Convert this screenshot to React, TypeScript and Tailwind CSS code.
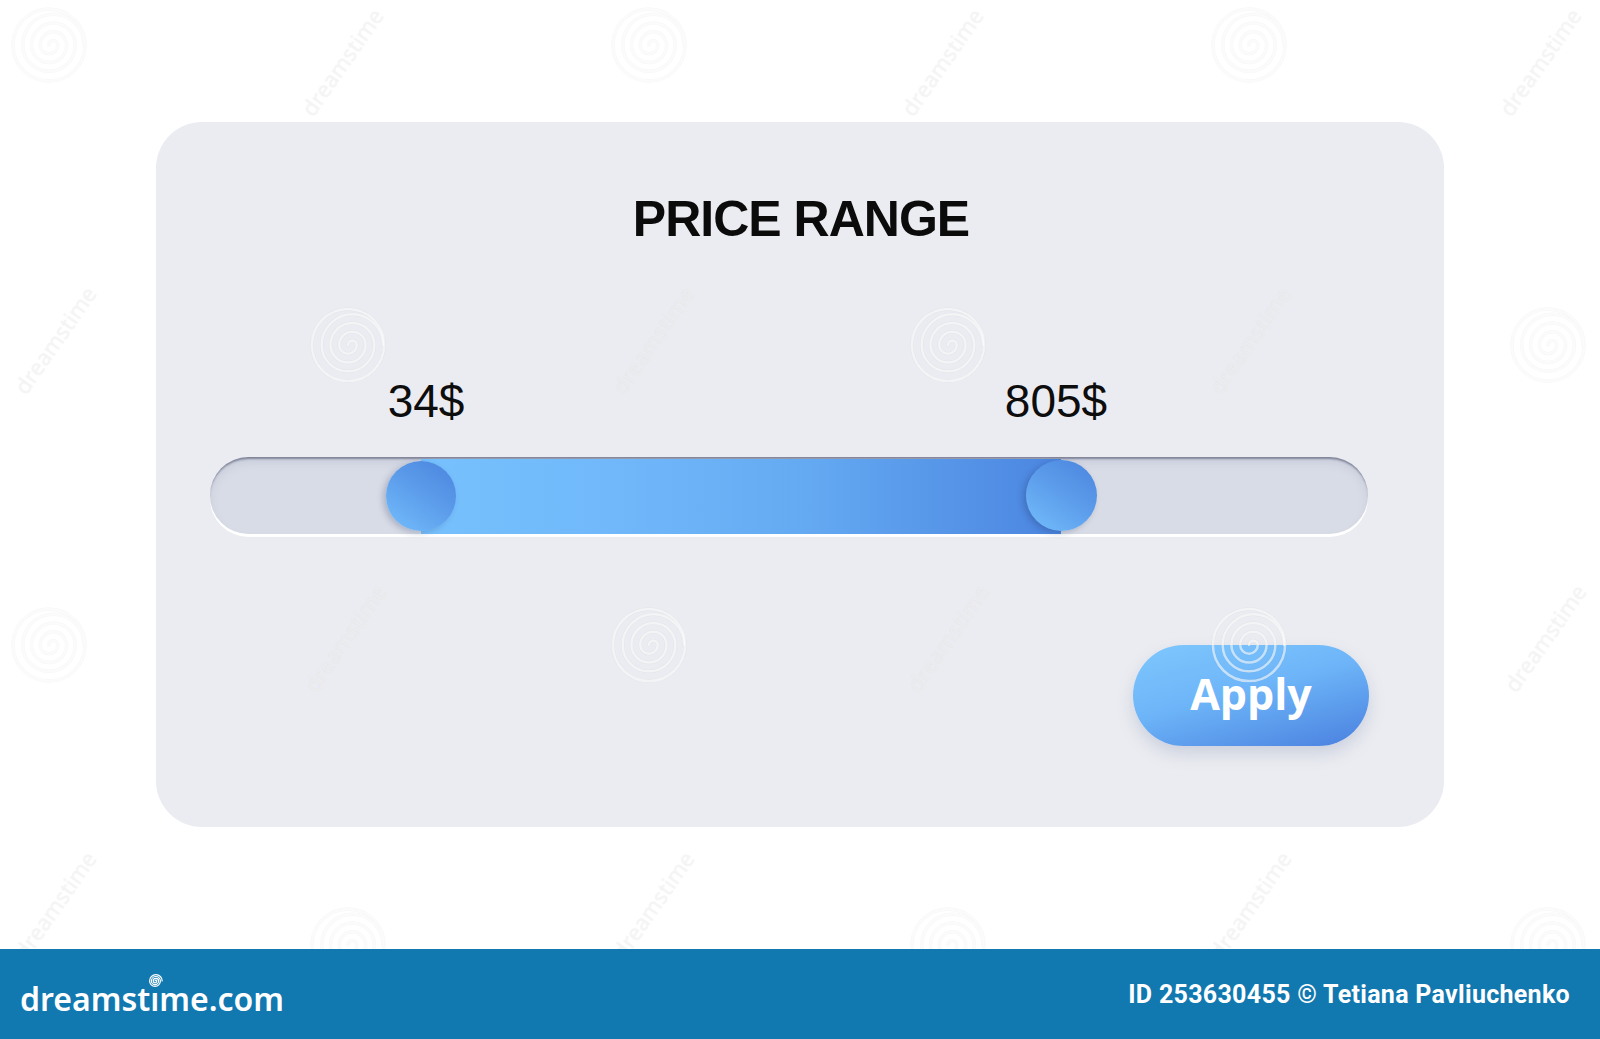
import React from "react";

const spiralPath =
  "M 0 0 a 4.5 4.5 0 0 1 9 0 a 9 9 0 0 1 -18 0 a 13.5 13.5 0 0 1 27 0 a 18 18 0 0 1 -36 0 a 22.5 22.5 0 0 1 45 0 a 27 27 0 0 1 -54 0 a 31.5 31.5 0 0 1 63 0";

function Spiral({ size, stroke, width, ring = true }: { size: number; stroke: string; width: number; ring?: boolean }) {
  return (
    <svg width={size} height={size} viewBox="-40 -40 80 80" fill="none">
      <path d={spiralPath} stroke={stroke} strokeWidth={width} strokeLinecap="round" />
      {ring && <circle cx="0" cy="0" r="37" stroke={stroke} strokeWidth={width} />}
    </svg>
  );
}

const spirals: [number, number][] = [
  [49, 45], [649, 45], [1249, 45],
  [348, 345], [948, 345], [1548, 345],
  [49, 645], [649, 645], [1249, 645],
  [348, 945], [948, 945], [1548, 945],
];

const marks: [number, number][] = [
  [342, 62], [942, 62], [1540, 62],
  [55, 340], [653, 340], [1250, 340],
  [345, 638], [948, 638], [1545, 638],
  [55, 905], [653, 905], [1250, 905],
];

export default function App() {
  return (
    <div className="relative w-full h-[1039px] bg-white overflow-hidden flex flex-col">
      {/* Card */}
      <div className="mx-auto mt-[122px] w-[1288px] h-[705px] rounded-[46px] bg-[#ebecf1] flex flex-col pt-[72px]">
        <h1 className="self-center text-[50px] leading-[50px] font-bold tracking-[-1px] text-[#0b0b0b] [font-family:'Liberation_Sans',Arial,sans-serif] translate-x-[1px]">
          PRICE RANGE
        </h1>

        {/* Labels */}
        <div className="relative ml-[54px] w-[1158px] h-[46px] mt-[134px] text-[46px] leading-[46px] text-[#0d0d0d] [font-family:'Liberation_Sans',Arial,sans-serif]">
          <span className="absolute top-0 left-[216px] -translate-x-1/2">34$</span>
          <span className="absolute top-0 left-[846px] -translate-x-1/2">805$</span>
        </div>

        {/* Track */}
        <div className="relative ml-[54px] mt-[33px] w-[1158px] h-[77px] rounded-full bg-[#d8dce6] shadow-[inset_0_3px_2px_-1px_rgba(80,84,110,0.6),inset_0_6px_8px_rgba(120,130,160,0.15),0_3px_0_#ffffff]">
          <div className="absolute top-[2px] bottom-0 left-[211px] w-[640px] bg-[linear-gradient(90deg,#77c1fd_0%,#70b8fa_30%,#64aaf2_60%,#4b85e0_100%)]" />
          <div className="absolute top-[4px] left-[176px] w-[70px] h-[70px] rounded-full bg-[linear-gradient(215deg,#4a84de_0%,#5b9bea_45%,#74befc_100%)] shadow-[-3px_2px_6px_rgba(50,70,120,0.28)]" />
          <div className="absolute top-[3px] left-[816px] w-[71px] h-[71px] rounded-full bg-[linear-gradient(215deg,#4a84de_0%,#5b9bea_45%,#74befc_100%)] shadow-[-3px_2px_6px_rgba(40,60,110,0.3)]" />
        </div>

        {/* Button */}
        <div className="ml-[977px] mt-[111px]">
          <button className="w-[236px] h-[101px] rounded-full bg-[linear-gradient(165deg,#7fc7fd_0%,#6db5f8_45%,#4a80df_100%)] shadow-[0_8px_16px_rgba(110,130,170,0.25)] text-white text-[43px] font-bold leading-none [font-family:'Open_Sans',sans-serif] flex items-center justify-center pb-[4px]">
            Apply
          </button>
        </div>
      </div>

      {/* Watermark overlay */}
      <div className="pointer-events-none absolute inset-0">
        {spirals.map(([x, y], i) => (
          <div
            key={"s" + i}
            className="absolute -translate-x-1/2 -translate-y-1/2"
            style={{ left: x, top: y }}
          >
            <div className="relative w-[78px] h-[78px]">
              <div className="absolute inset-0">
                <Spiral size={78} stroke="rgba(0,0,0,0.035)" width={3.6} />
              </div>
              <div className="absolute inset-0">
                <Spiral size={78} stroke="rgba(255,255,255,0.6)" width={2.6} />
              </div>
            </div>
          </div>
        ))}
        {marks.map(([x, y], i) => (
          <div
            key={"m" + i}
            className="absolute -translate-x-1/2 -translate-y-1/2 -rotate-[55deg] text-[22px] text-white/50 [text-shadow:0_0_1px_rgba(0,0,0,0.09)] [font-family:'Noto_Sans',sans-serif] whitespace-nowrap"
            style={{ left: x, top: y }}
          >
            dreamstime
          </div>
        ))}
      </div>

      {/* Footer bar */}
      <div className="relative z-10 mt-auto h-[90px] bg-[#1178b0] flex items-center justify-between pl-[20px] pr-[30px]">
        <div className="relative text-white text-[32px] leading-none [font-family:'Noto_Sans',sans-serif] font-semibold pt-[10px]">
          <span>dreamst</span>
          <span className="relative">
            ı
            <span className="absolute left-1/2 -translate-x-1/2 -top-[4px]">
              <Spiral size={16} stroke="#ffffff" width={6} ring={false} />
            </span>
          </span>
          <span>me.com</span>
        </div>
        <div className="text-white text-[25px] font-bold leading-none tracking-[0.3px] [font-family:Roboto,sans-serif]">
          ID 253630455 © Tetiana Pavliuchenko
        </div>
      </div>
    </div>
  );
}
